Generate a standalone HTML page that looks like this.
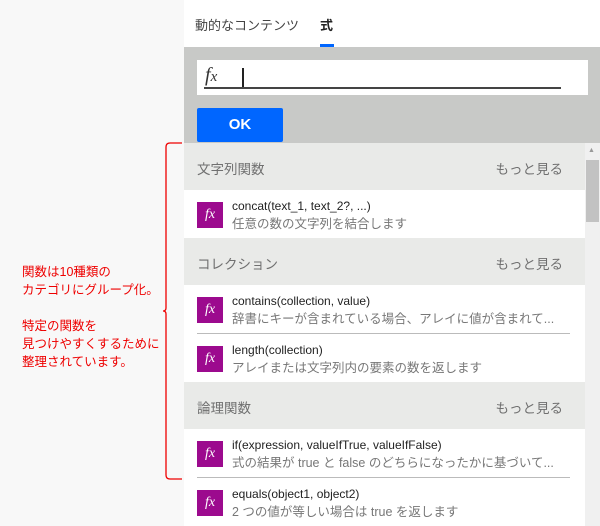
<!DOCTYPE html><html><head><meta charset="utf-8"><style>
body{margin:0;width:600px;height:526px;overflow:hidden;background:#f8f8f8;font-family:"Liberation Sans","Noto Sans CJK JP",sans-serif;position:relative}
.a{position:absolute}
.panel{left:184px;top:0;width:416px;height:526px;background:#fff}
.hdr{position:absolute;left:184px;width:401px;height:47px;background:#e9eae8;color:#707070;font-size:13.5px}
.hdr span{position:absolute;left:13px;top:15px}
.hdr b{position:absolute;right:22px;top:15px;font-weight:normal}
.item{position:absolute;left:184px;width:401px;height:48px;background:#fff}
.ic{position:absolute;left:13px;top:12px;width:26px;height:26px;background:#9c0a8e;color:#fff;font-family:"Liberation Serif",serif;font-style:italic;font-size:14px;text-align:center;line-height:26px}
.t1{position:absolute;left:48px;top:9px;font-size:12px;color:#222}
.t2{position:absolute;left:48px;top:23px;font-size:12.5px;color:#777;white-space:nowrap}
.sep{position:absolute;left:197px;width:373px;height:1px;background:#bbb}
.red{left:22px;color:#e00;font-size:12.5px;line-height:18px}
</style></head><body>
<div class="a panel"></div>
<div class="a" style="left:195px;top:15px;font-size:13px;color:#444">動的なコンテンツ</div>
<div class="a" style="left:320px;top:15px;font-size:13px;color:#222;font-weight:bold">式</div>
<div class="a" style="left:320px;top:44px;width:14px;height:3px;background:#0066ff"></div>
<div class="a" style="left:184px;top:47px;width:416px;height:96px;background:#c8c9c7"></div>
<div class="a" style="left:197px;top:60px;width:391px;height:35px;background:#fff"></div>
<div class="a" style="left:205px;top:64px;font-family:'Liberation Serif',serif;font-style:italic;font-size:20px;color:#333">f<span style="font-size:15px">x</span></div>
<div class="a" style="left:242px;top:68px;width:2px;height:20px;background:#222"></div>
<div class="a" style="left:204px;top:87px;width:357px;height:2px;background:#444"></div>
<div class="a" style="left:197px;top:108px;width:86px;height:34px;background:#0066ff;border-radius:2px;color:#fff;font-weight:bold;font-size:15px;text-align:center;line-height:34px">OK</div>
<div class="a" style="left:585px;top:143px;width:15px;height:383px;background:#f0f0f0"></div>
<div class="a" style="left:588px;top:147px;font-size:7px;color:#999">▲</div>
<div class="a" style="left:586px;top:160px;width:13px;height:62px;background:#c2c2c2"></div>

<div class="hdr" style="top:143px"><span>文字列関数</span><b>もっと見る</b></div>
<div class="item" style="top:190px"><div class="ic">fx</div><div class="t1">concat(text_1, text_2?, ...)</div><div class="t2">任意の数の文字列を結合します</div></div>
<div class="hdr" style="top:238px"><span>コレクション</span><b>もっと見る</b></div>
<div class="item" style="top:285px"><div class="ic">fx</div><div class="t1">contains(collection, value)</div><div class="t2">辞書にキーが含まれている場合、アレイに値が含まれて...</div></div>
<div class="sep" style="top:333px"></div>
<div class="item" style="top:334px"><div class="ic">fx</div><div class="t1">length(collection)</div><div class="t2">アレイまたは文字列内の要素の数を返します</div></div>
<div class="hdr" style="top:382px"><span>論理関数</span><b>もっと見る</b></div>
<div class="item" style="top:429px"><div class="ic">fx</div><div class="t1">if(expression, valueIfTrue, valueIfFalse)</div><div class="t2">式の結果が true と false のどちらになったかに基づいて...</div></div>
<div class="sep" style="top:477px"></div>
<div class="item" style="top:478px"><div class="ic">fx</div><div class="t1">equals(object1, object2)</div><div class="t2">2 つの値が等しい場合は true を返します</div></div>

<svg class="a" style="left:160px;top:140px" width="26" height="346"><path d="M22 3H10Q6 3 6 7V168Q6 171 3 171Q6 171 6 174V335Q6 339 10 339H22" fill="none" stroke="#e00" stroke-width="1.3"/></svg>
<div class="a red" style="top:263px">関数は10種類の<br>カテゴリにグループ化。<br><br>特定の関数を<br>見つけやすくするために<br>整理されています。</div>
</body></html>
